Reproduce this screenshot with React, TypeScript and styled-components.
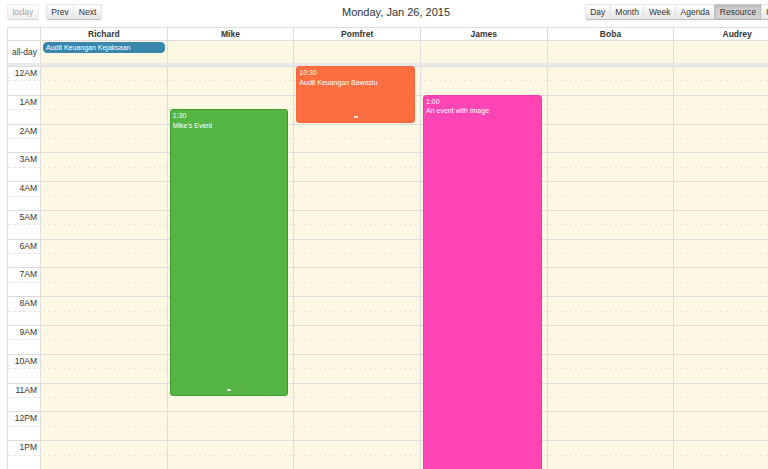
import React from "react";
import styled, { createGlobalStyle, css } from "styled-components";

const SLOT = 14.4;
const HOUR = SLOT * 2;
const LINE = "#ddd";
const TODAY_BG = "#fcf8e3";

const GlobalStyle = createGlobalStyle`
  html, body {
    margin: 0;
    padding: 0;
    height: 469px;
    overflow: hidden;
    background: #fff;
  }
  body {
    font-family: "Liberation Sans", Arial, Helvetica, sans-serif;
    color: #333;
  }
`;

const Calendar = styled.div`
  width: 806px;
  margin-left: 7px;
`;

const Toolbar = styled.div`
  display: grid;
  grid-template-columns: 1fr auto 1fr;
  align-items: center;
  padding-top: 4px;
  height: 16px;
  margin-bottom: 7px;
`;

const Left = styled.div`
  display: flex;
  gap: 7px;
`;

const Right = styled.div`
  display: flex;
  justify-content: flex-end;
  padding-right: 3px;
`;

const Title = styled.h2`
  margin: 0 28px 0 0;
  font-size: 11px;
  font-weight: normal;
  color: #333;
  white-space: nowrap;
`;

const Group = styled.div`
  display: flex;
  & > button {
    border-radius: 0;
    margin-left: -1px;
  }
  & > button:first-child {
    border-radius: 3px 0 0 3px;
    margin-left: 0;
  }
  & > button:last-child {
    border-radius: 0 3px 3px 0;
  }
`;

const Button = styled.button<{ $active?: boolean }>`
  height: 16px;
  padding: 0 4.5px;
  font-family: inherit;
  font-size: 8.5px;
  color: #333;
  white-space: nowrap;
  border: 1px solid;
  border-color: #e6e6e6 #e6e6e6 #bfbfbf;
  border-radius: 3px;
  background: linear-gradient(#fff, #e6e6e6);
  box-shadow: inset 0 1px 0 rgba(255, 255, 255, 0.2), 0 1px 2px rgba(0, 0, 0, 0.05);
  cursor: pointer;
  &:disabled {
    opacity: 0.65;
    color: #777;
    box-shadow: none;
  }
  ${(p) =>
    p.$active &&
    css`
      background: #d4d4d4;
      border-color: #c4c4c4 #c4c4c4 #b0b0b0;
      box-shadow: inset 0 2px 4px rgba(0, 0, 0, 0.15);
    `}
`;

const View = styled.div`
  border-top: 1px solid ${LINE};
  border-left: 1px solid ${LINE};
`;

const Row = styled.div<{ $height: number }>`
  display: grid;
  grid-template-columns: 32px repeat(6, 1fr) 13px;
  height: ${(p) => p.$height}px;
  box-sizing: border-box;
`;

const HeadCell = styled.div`
  border-left: 1px solid ${LINE};
  font-size: 8.5px;
  font-weight: bold;
  text-align: center;
  line-height: 12px;
  &:first-child {
    border-left: none;
  }
`;

const AllDayRow = styled(Row)`
  border-top: 1px solid ${LINE};
`;

const AxisLabel = styled.div`
  font-size: 8.5px;
  padding-right: 3px;
  display: flex;
  align-items: center;
  justify-content: flex-end;
  white-space: nowrap;
`;

const DayCell = styled.div`
  border-left: 1px solid ${LINE};
  background: ${TODAY_BG};
  padding: 0 1px;
`;

const AllDayEvent = styled.div`
  margin: 1px 1px 0 1px;
  height: 11px;
  box-sizing: border-box;
  background: #3a87ad;
  border: 1px solid #3a87ad;
  border-radius: 4px;
  color: #fff;
  font-size: 7px;
  line-height: 9px;
  padding-left: 2px;
  white-space: nowrap;
  overflow: hidden;
`;

const Divider = styled.div`
  height: 3px;
  background: #e9e9e9;
`;

const Body = styled.div`
  position: relative;
`;

const SlotRow = styled.div<{ $minor: boolean }>`
  display: grid;
  grid-template-columns: 32px 1fr;
  height: ${SLOT}px;
  box-sizing: border-box;
  border-top: 1px ${(p) => (p.$minor ? "dashed #ebe7dc" : `solid ${LINE}`)};
`;

const SlotLabel = styled.div`
  font-size: 8.5px;
  text-align: right;
  padding-right: 3px;
  line-height: 13px;
  background: #fff;
`;

const SlotLane = styled.div`
  background: ${TODAY_BG};
`;

const Lanes = styled.div`
  position: absolute;
  top: 0;
  bottom: 0;
  left: 32px;
  right: 13px;
  display: grid;
  grid-template-columns: repeat(6, 1fr);
  overflow: hidden;
`;

const Lane = styled.div`
  position: relative;
  border-left: 1px solid ${LINE};
`;

const TimedEvent = styled.div<{ $bg: string; $border: string }>`
  position: absolute;
  left: 2px;
  right: 5px;
  box-sizing: border-box;
  background: ${(p) => p.$bg};
  border: 1px solid ${(p) => p.$border};
  border-radius: 3px;
  color: #fff;
  font-size: 7px;
  line-height: 9.5px;
  padding: 1px 2px 0;
  overflow: hidden;
`;

const Resizer = styled.div`
  position: absolute;
  bottom: 4px;
  left: 50%;
  width: 4px;
  height: 2px;
  margin-left: -2px;
  background: rgba(255, 255, 255, 0.8);
`;

const resources = ["Richard", "Mike", "Pomfret", "James", "Boba", "Audrey"];

type CalEvent = {
  lane: number;
  start: number;
  end: number;
  time: string;
  title: string;
  bg: string;
  border: string;
};

const events: CalEvent[] = [
  { lane: 2, start: 0, end: 2, time: "10:30", title: "Audit Keuangan Bawaslu", bg: "#ff6e40", border: "#f5683c" },
  { lane: 1, start: 1.5, end: 11.5, time: "1:30", title: "Mike's Event", bg: "#54b444", border: "#3f9a31" },
  { lane: 3, start: 1, end: 16, time: "1:00", title: "An event with image", bg: "#ff44b4", border: "#f03aa8" },
];

const hourLabel = (h: number) => {
  const suffix = h < 12 ? "AM" : "PM";
  const n = h % 12 === 0 ? 12 : h % 12;
  return `${n}${suffix}`;
};

export default function App() {
  // only the slots that fit in the window (12AM .. 2PM)
  const slots = Array.from({ length: 28 }, (_, i) => i);
  return (
    <>
      <GlobalStyle />
      <Calendar>
        <Toolbar>
          <Left>
            <Button disabled>today</Button>
            <Group>
              <Button>Prev</Button>
              <Button>Next</Button>
            </Group>
          </Left>
          <Title>Monday, Jan 26, 2015</Title>
          <Right>
            <Group>
              <Button>Day</Button>
              <Button>Month</Button>
              <Button>Week</Button>
              <Button>Agenda</Button>
              <Button $active>Resource</Button>
              <Button>Upcoming</Button>
            </Group>
          </Right>
        </Toolbar>
        <View>
          <Row $height={12}>
            <HeadCell />
            {resources.map((r) => (
              <HeadCell key={r}>{r}</HeadCell>
            ))}
            <HeadCell />
          </Row>
          <AllDayRow $height={23}>
            <AxisLabel>all-day</AxisLabel>
            {resources.map((r, i) => (
              <DayCell key={r}>
                {i === 0 && <AllDayEvent>Audit Keuangan Kejaksaan</AllDayEvent>}
              </DayCell>
            ))}
            <DayCell />
          </AllDayRow>
          <Divider />
          <Body>
            {slots.map((i) => (
              <SlotRow key={i} $minor={i % 2 === 1}>
                <SlotLabel>{i % 2 === 0 ? hourLabel(i / 2) : ""}</SlotLabel>
                <SlotLane />
              </SlotRow>
            ))}
            <Lanes>
              {resources.map((r, li) => (
                <Lane key={r}>
                  {events
                    .filter((e) => e.lane === li)
                    .map((e) => (
                      <TimedEvent
                        key={e.title}
                        $bg={e.bg}
                        $border={e.border}
                        style={{ top: e.start * HOUR, height: (e.end - e.start) * HOUR - 1 }}
                      >
                        <div>{e.time}</div>
                        <div>{e.title}</div>
                        <Resizer />
                      </TimedEvent>
                    ))}
                </Lane>
              ))}
            </Lanes>
          </Body>
        </View>
      </Calendar>
    </>
  );
}
